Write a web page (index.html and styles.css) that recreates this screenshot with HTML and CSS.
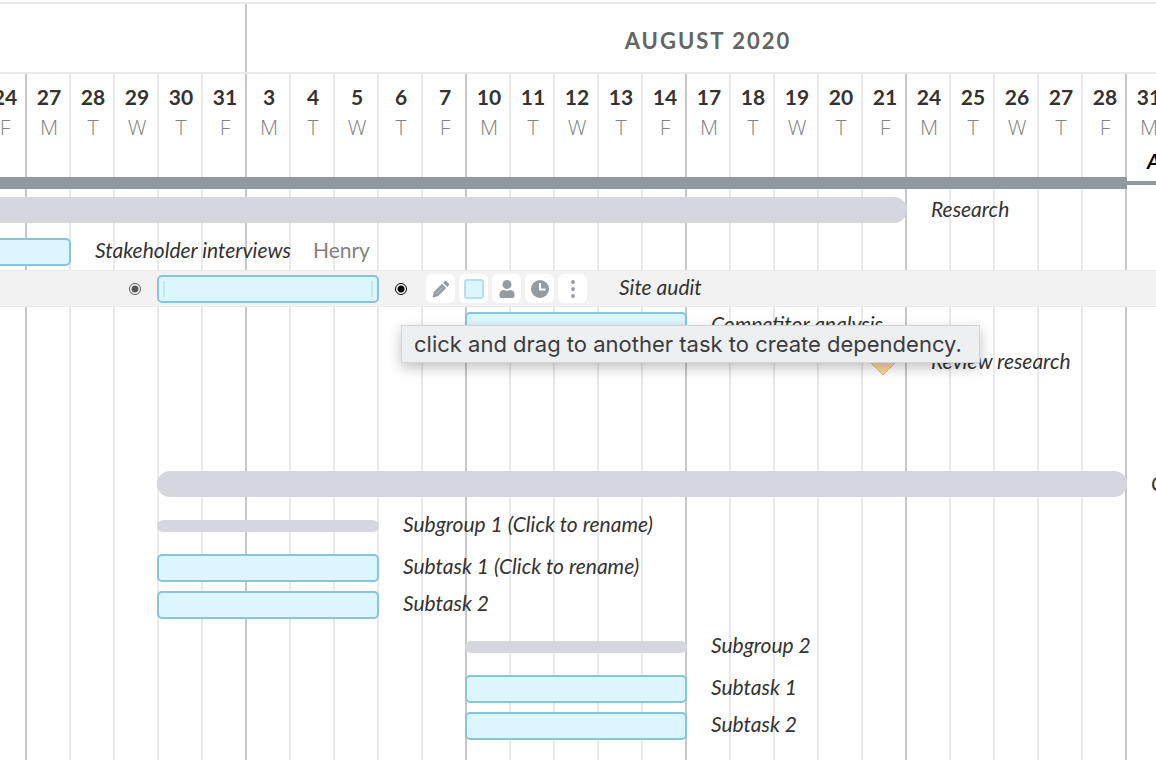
FILE: index.html
```
<!DOCTYPE html>
<html lang="en">
<head>
<meta charset="utf-8">
<title>Project timeline</title>
<link rel="stylesheet" href="styles.css">
</head>
<body>
<main class="chart">
  <header class="months">
    <div class="month month-previous"></div>
    <div class="month month-current">AUGUST 2020</div>
  </header>
  <div class="timeline">
    <div class="days">
      <div class="day"><b>24</b><span>F</span></div>
      <div class="day"><b>27</b><span>M</span></div>
      <div class="day"><b>28</b><span>T</span></div>
      <div class="day"><b>29</b><span>W</span></div>
      <div class="day"><b>30</b><span>T</span></div>
      <div class="day"><b>31</b><span>F</span></div>
      <div class="day"><b>3</b><span>M</span></div>
      <div class="day"><b>4</b><span>T</span></div>
      <div class="day"><b>5</b><span>W</span></div>
      <div class="day"><b>6</b><span>T</span></div>
      <div class="day"><b>7</b><span>F</span></div>
      <div class="day"><b>10</b><span>M</span></div>
      <div class="day"><b>11</b><span>T</span></div>
      <div class="day"><b>12</b><span>W</span></div>
      <div class="day"><b>13</b><span>T</span></div>
      <div class="day"><b>14</b><span>F</span></div>
      <div class="day"><b>17</b><span>M</span></div>
      <div class="day"><b>18</b><span>T</span></div>
      <div class="day"><b>19</b><span>W</span></div>
      <div class="day"><b>20</b><span>T</span></div>
      <div class="day"><b>21</b><span>F</span></div>
      <div class="day"><b>24</b><span>M</span></div>
      <div class="day"><b>25</b><span>T</span></div>
      <div class="day"><b>26</b><span>W</span></div>
      <div class="day"><b>27</b><span>T</span></div>
      <div class="day"><b>28</b><span>F</span></div>
      <div class="day"><b>31</b><span>M</span></div>
    </div>

    <div class="project">
      <div class="project-label">A</div>
      <div class="project-done"></div>
      <div class="project-rest"></div>
    </div>

    <section class="group">
      <div class="row row-group row-research">
        <div class="bar bar-group from-start to-21"></div>
        <div class="label after-21"><span class="name">Research</span></div>
      </div>
      <div class="row">
        <div class="bar bar-task from-start to-27"></div>
        <div class="label after-27"><span class="name">Stakeholder interviews</span><span class="person">Henry</span></div>
      </div>
      <div class="row row-active">
        <div class="link-before"><button class="link" type="button" aria-label="Create dependency before"></button></div>
        <div class="bar bar-task bar-resizable at-july-30"></div>
        <div class="actions">
          <div class="link-after">
            <button class="link link-hover" type="button" aria-label="Create dependency after" aria-describedby="link-tip"></button>
            <div class="tooltip" role="tooltip" id="link-tip">click and drag to another task to create dependency.</div>
          </div>
          <div class="tools">
            <button class="tool" type="button" aria-label="Edit">
              <svg width="20" height="20" viewBox="0 0 20 20"><path d="M1.500 18.500l1.300-5.500L11 4.800l4.200 4.200L7 17.200zM12 3.800l1.500-1.500q1-.9 2 0l2.200 2.200q.9 1 0 2L16.200 8z"/><path class="cut" d="M5 15L11.500 8.500"/></svg>
            </button>
            <button class="tool" type="button" aria-label="Color"><span class="swatch"></span></button>
            <button class="tool" type="button" aria-label="Assign">
              <svg width="20" height="20" viewBox="0 0 20 20"><circle cx="10" cy="5.500" r="4.500"/><path d="M2.500 17v-1.500q0-4.500 4.500-4.500 3 1.500 6 0 4.500 0 4.500 4.500V17q0 2-2 2h-11q-2 0-2-2z"/></svg>
            </button>
            <button class="tool" type="button" aria-label="Time">
              <svg width="20" height="20" viewBox="0 0 20 20"><circle cx="10" cy="10" r="9"/><path class="hands" d="M10 4v6.500h5.500"/></svg>
            </button>
            <button class="tool" type="button" aria-label="More">
              <svg width="20" height="20" viewBox="0 0 20 20"><circle cx="10" cy="3" r="1.900"/><circle cx="10" cy="10" r="1.900"/><circle cx="10" cy="17" r="1.900"/></svg>
            </button>
          </div>
          <span class="name">Site audit</span>
        </div>
      </div>
      <div class="row">
        <div class="bar bar-task at-august-10"></div>
        <div class="label after-14"><span class="name">Competitor analysis</span></div>
      </div>
      <div class="row">
        <svg class="milestone" width="28" height="28" viewBox="0 0 28 28"><path d="M14 2l12 12-12 12L2 14z"/></svg>
        <div class="label after-21"><span class="name">Review research</span></div>
      </div>
    </section>

    <section class="group">
      <div class="row row-group">
        <div class="bar bar-group from-july-30 to-28"></div>
        <div class="label after-28"><span class="name">C</span></div>
      </div>
      <div class="row row-subgroup">
        <div class="bar bar-subgroup at-july-30"></div>
        <div class="label after-5"><span class="name">Subgroup 1 (Click to rename)</span></div>
      </div>
      <div class="row">
        <div class="bar bar-task at-july-30"></div>
        <div class="label after-5"><span class="name">Subtask 1 (Click to rename)</span></div>
      </div>
      <div class="row">
        <div class="bar bar-task at-july-30"></div>
        <div class="label after-5"><span class="name">Subtask 2</span></div>
      </div>
      <div class="row row-subgroup">
        <div class="bar bar-subgroup at-august-10"></div>
        <div class="label after-14"><span class="name">Subgroup 2</span></div>
      </div>
      <div class="row">
        <div class="bar bar-task at-august-10"></div>
        <div class="label after-14"><span class="name">Subtask 1</span></div>
      </div>
      <div class="row">
        <div class="bar bar-task at-august-10"></div>
        <div class="label after-14"><span class="name">Subtask 2</span></div>
      </div>
    </section>
  </div>
</main>
</body>
</html>
```
FILE: styles.css
```
* { box-sizing: border-box; }

body {
  margin: 0;
  background: #fff;
  color: #333;
  font-family: Lato, "Liberation Sans", sans-serif;
  font-size: 21px;
  line-height: 24px;
  overflow: hidden;
}

button { margin: 0; padding: 0; border: 0; }

/* The first day column is scrolled partly out of view. */
.chart {
  --day: 44px;
  --line: #e9e9e9;
  --week: #c8c8ca;
  display: flex;
  flex-direction: column;
  min-height: 100vh;
  margin-left: -19px;
  padding-top: 2px;
}

.months, .days, .project, .row {
  display: grid;
  grid-template-columns: repeat(27, var(--day));
}

.months {
  height: 72px;
  border-top: 2px solid var(--line);
  border-bottom: 2px solid var(--line);
}
.month {
  display: flex;
  align-items: center;
  justify-content: center;
  padding-top: 6px;
  color: #626567;
  font-size: 22px;
  font-weight: 700;
  letter-spacing: 2px;
}
.month-previous { grid-column: 1 / span 6; }
.month-current { grid-column: 7 / span 21; border-left: 2px solid var(--week); }

.timeline {
  flex: 1;
  background:
    repeating-linear-gradient(90deg, var(--week) 0 2px, transparent 2px 220px) 44px 0,
    repeating-linear-gradient(90deg, var(--line) 0 2px, transparent 2px 44px);
}

.days { height: 77px; padding-top: 8px; }
.day {
  display: flex;
  flex-direction: column;
  align-items: center;
  padding-left: 4px;
  font-size: 21px;
  line-height: 30px;
}
.day b { font-weight: 700; }
.day span {
  color: #7f8488;
  font-family: "Open Sans", "Liberation Sans", sans-serif;
  font-size: 21px;
  font-weight: 300;
}

.project { height: 41px; align-items: center; grid-template-rows: 26px 12px; }
.project-label {
  grid-column: 27;
  padding: 0 0 6px 22px;
  color: #000;
  font-style: italic;
  font-weight: 700;
}
.project-done { grid-area: 2 / 1 / auto / span 26; height: 12px; margin-right: -2px; background: #8f999f; }
.project-rest { grid-area: 2 / 27; height: 4px; background: #8f999f; }

.group + .group { margin-top: 85px; }

.row { height: 37px; align-items: center; }
.row > * { grid-row: 1; }
.row-group { height: 36px; }
.row-research { margin-bottom: 5px; }
.row-subgroup { height: 47px; }
.row-active {
  border-top: 1px solid #e9e9e9;
  border-bottom: 1px solid #e9e9e9;
  background: #f2f2f2;
}

.bar { margin-right: -2px; }
.bar-group { height: 26px; border-radius: 13px; background: #d6d6df; }
.bar-subgroup { height: 12px; margin-top: 1px; border-radius: 6px; background: #d6d6df; }
.bar-task {
  height: 28px;
  margin-top: 1px;
  border: 2px solid #89c4d9;
  border-radius: 5px;
  background: #dbf6fe;
}
.bar-resizable { display: flex; justify-content: space-between; padding: 4px; }
.bar-resizable::before, .bar-resizable::after { content: ""; width: 2px; background: #c5e6f0; }

.from-start.to-21 { grid-column: 1 / span 21; }
.from-start.to-27 { grid-column: 1 / span 2; }
.from-july-30.to-28 { grid-column: 5 / span 22; }
.at-july-30 { grid-column: 5 / span 5; }
.at-august-10 { grid-column: 12 / span 5; }

.after-27 { grid-column: 3 / -1; }
.after-5 { grid-column: 10 / -1; }
.after-14 { grid-column: 17 / -1; }
.after-21 { grid-column: 22 / -1; }
.after-28 { grid-column: 27 / -1; }

.label { display: flex; gap: 22px; padding: 0 0 3px 26px; white-space: nowrap; }
.name { font-style: italic; }
.person { color: #818181; }

.milestone { grid-column: 21; justify-self: center; margin-top: 1px; }
.milestone path { fill: #fbd999; stroke: #e5b968; stroke-width: 1; }

.link-before { grid-column: 4; display: flex; justify-content: center; }
.link {
  display: block;
  width: 12px;
  height: 12px;
  border: 1px solid #555;
  border-radius: 50%;
  background: radial-gradient(circle, #555 0 3px, #fff 4px);
}
.link-hover { border-color: #000; background: radial-gradient(circle, #000 0 3px, #fff 4px); }

.actions {
  grid-column: 10 / -1;
  display: flex;
  align-items: center;
  padding-left: 18px;
  white-space: nowrap;
}
.actions .name { margin-left: 32px; padding-bottom: 4px; }
.link-after { position: relative; }
.tools { display: flex; gap: 4px; margin-left: 19px; }
.tool {
  display: grid;
  place-items: center;
  width: 29px;
  height: 29px;
  border-radius: 6px;
  background: #fff;
}
.tool svg { fill: #959ba1; }
.tool .cut { fill: none; stroke: #c9cdd0; stroke-width: 1; }
.tool .hands { fill: none; stroke: #fff; stroke-width: 2; }
.swatch {
  width: 20px;
  height: 20px;
  border: 2px solid #b5dfea;
  border-radius: 3px;
  background: #dbf6fe;
}

.tooltip {
  position: absolute;
  z-index: 1;
  top: 42px;
  left: 6px;
  padding: 4px 17px 4px 12px;
  border: 1px solid #d2d3d4;
  background: #eeeff0;
  box-shadow: 0 5px 14px rgba(0, 0, 0, .24);
  color: #3b3c3e;
  font-family: Inter, "Liberation Sans", sans-serif;
  font-size: 22px;
  line-height: 28px;
}
```
